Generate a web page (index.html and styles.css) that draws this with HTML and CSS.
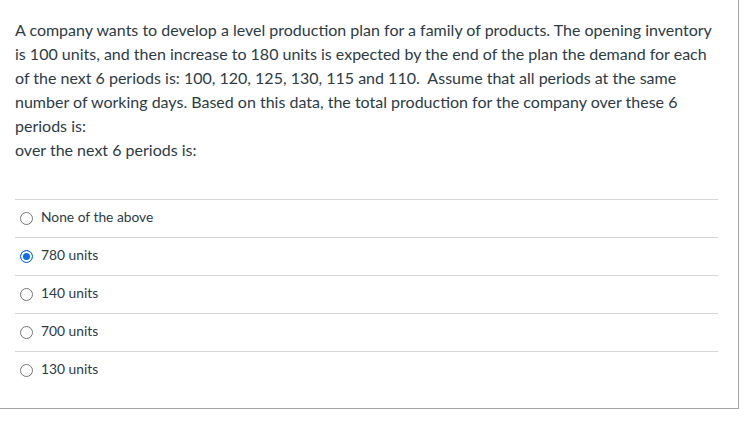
FILE: index.html
```html
<!DOCTYPE html>
<html>
<head>
<meta charset="utf-8">
<link rel="stylesheet" href="styles.css">
</head>
<body>
<div class="question">
  <div class="text">
    A company wants to develop a level production plan for a family of products. The opening inventory is 100 units, and then increase to 180 units is expected by the end of the plan the demand for each of the next 6 periods is: 100, 120, 125, 130, 115 and 110.&nbsp; Assume that all periods at the same number of working days. Based on this data, the total production for the company over these 6 periods is:<br>over the next 6 periods is:
  </div>
  <div class="answers">
    <label class="answer"><span class="radio"></span><span>None of the above</span></label>
    <label class="answer"><span class="radio checked"></span><span>780 units</span></label>
    <label class="answer"><span class="radio"></span><span>140 units</span></label>
    <label class="answer"><span class="radio"></span><span>700 units</span></label>
    <label class="answer"><span class="radio"></span><span>130 units</span></label>
  </div>
</div>
</body>
</html>
```
FILE: styles.css
```css
html, body {
  margin: 0;
  padding: 0;
  background: #fff;
}
body {
  font-family: Lato, "Noto Sans", sans-serif;
  color: #2d3b45;
}
.question {
  width: 739px;
  height: 409px;
  box-sizing: border-box;
  border-right: 1px solid #a5a5a5;
  border-bottom: 1px solid #a5a5a5;
}
.text {
  padding: 18px 20px 0 15px;
  font-size: 16px;
  line-height: 24px;
}
.answers {
  margin: 37px 20px 0 15px;
}
.answer {
  display: flex;
  align-items: center;
  gap: 8px;
  height: 32px;
  padding-bottom: 5px;
  border-top: 1px solid #d7d7d7;
  font-size: 13.8px;
  padding-left: 5px;
  box-sizing: content-box;
}
.radio {
  width: 11px;
  height: 11px;
  border: 1px solid #767676;
  border-radius: 50%;
  box-sizing: content-box;
  flex: none;
  margin-top: 4px;
}
.radio.checked {
  border: 1px solid #0b6cf0;
  background: #0b6cf0;
  box-shadow: inset 0 0 0 2px #fff;
}
```
